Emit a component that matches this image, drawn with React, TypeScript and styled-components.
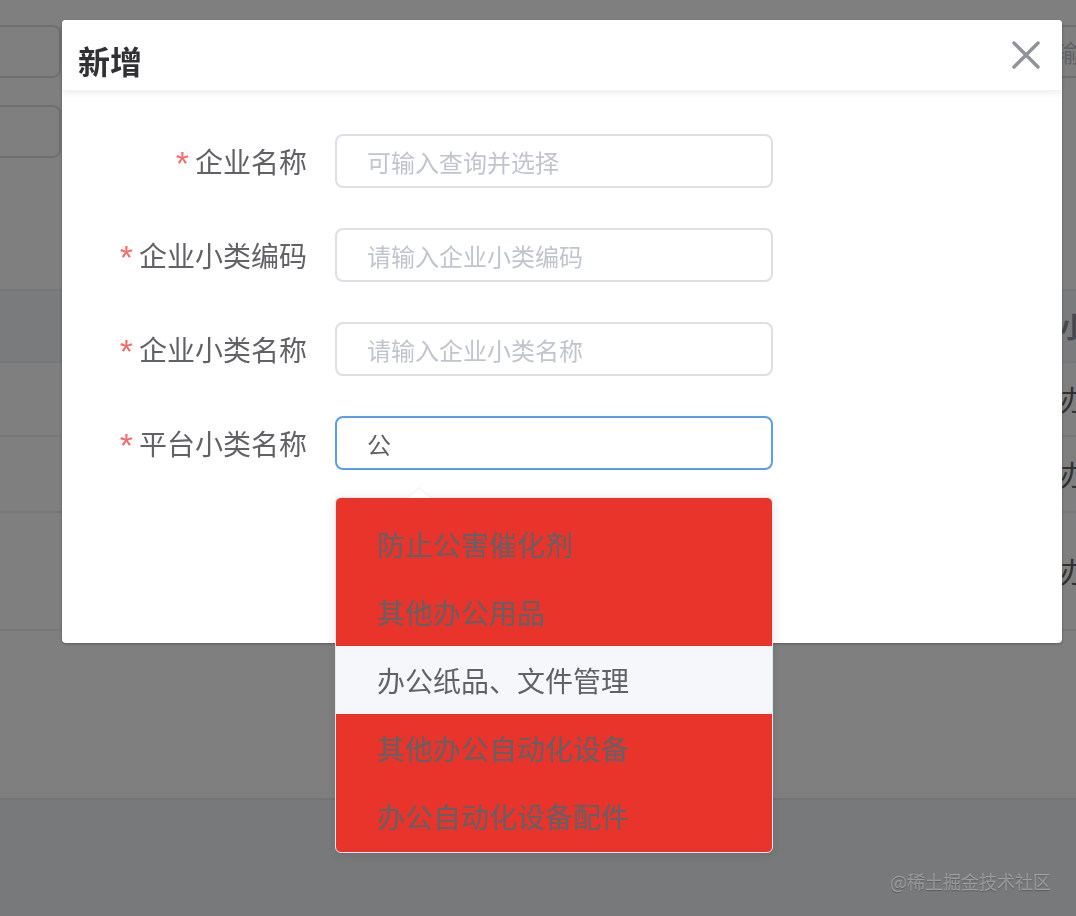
import React from "react";
import styled, { createGlobalStyle } from "styled-components";

const GlobalStyle = createGlobalStyle`
  html, body {
    margin: 0;
    padding: 0;
    width: 1076px;
    height: 916px;
    overflow: hidden;
    font-family: "Noto Sans CJK SC", "Noto Sans", sans-serif;
  }
  * { box-sizing: border-box; }
`;

/* ---------- background page (under the mask) ---------- */

const Page = styled.div`
  width: 1076px;
  height: 916px;
  background: #ffffff;
  display: flex;
  flex-direction: column;
  overflow: hidden;
`;

const Toolbar = styled.div`
  height: 289px;
  display: flex;
  justify-content: space-between;
  align-items: flex-start;
  padding-top: 25px;
`;

const ToolCol = styled.div<{ $side: "left" | "right" }>`
  display: flex;
  flex-direction: column;
  gap: 27px;
  margin-left: ${(p) => (p.$side === "left" ? "-60px" : "0")};
  margin-right: ${(p) => (p.$side === "right" ? "-60px" : "0")};
`;

const BgInput = styled.div`
  width: 121px;
  height: 53px;
  border: 2px solid #dcdfe6;
  border-radius: 8px;
  font-size: 24px;
  line-height: 49px;
  color: #c0c4cc;
  padding-left: 14px;
  white-space: nowrap;
  overflow: hidden;
`;

const Table = styled.div`
  display: flex;
  flex-direction: column;
  border-top: 2px solid #ebeef5;
`;

const TRow = styled.div<{ $h: number; $head?: boolean }>`
  height: ${(p) => p.$h}px;
  background: ${(p) => (p.$head ? "#f5f7fa" : "#ffffff")};
  border-bottom: 2px solid #ebeef5;
  display: flex;
  align-items: center;
  justify-content: flex-end;
  overflow: hidden;
`;

const TCell = styled.div<{ $head?: boolean }>`
  width: 60px;
  margin-right: -44px;
  font-size: 28px;
  white-space: nowrap;
  color: ${(p) => (p.$head ? "#909399" : "#606266")};
  font-weight: ${(p) => (p.$head ? 600 : 400)};
`;

const Spacer = styled.div`
  flex: 1;
  background: #ffffff;
`;

const Footer = styled.div`
  height: 118px;
  background: #f0f2f5;
  border-top: 2px solid #e6e8ec;
`;

/* ---------- overlay ---------- */

const Mask = styled.div`
  position: fixed;
  inset: 0;
  background: rgba(0, 0, 0, 0.5);
`;

const Watermark = styled.div`
  position: fixed;
  left: 890px;
  top: 867px;
  font-size: 18px;
  line-height: 28px;
  color: rgba(255, 255, 255, 0.32);
  text-shadow: 0 1px 1px rgba(0, 0, 0, 0.25);
  white-space: nowrap;
`;

const Dialog = styled.div`
  position: fixed;
  left: 62px;
  top: 20px;
  width: 1000px;
  height: 623px;
  background: #ffffff;
  border-radius: 4px;
  box-shadow: 0 1px 3px rgba(0, 0, 0, 0.3);
  display: flex;
  flex-direction: column;
`;

const DialogHeader = styled.div`
  position: relative;
  z-index: 1;
  height: 70px;
  padding: 0 22px 0 16px;
  display: flex;
  align-items: center;
  justify-content: space-between;
  background: #ffffff;
  border-radius: 4px 4px 0 0;
  box-shadow: 0 3px 6px rgba(0, 0, 0, 0.07);
`;

const Title = styled.div`
  margin-top: 10px;
  font-size: 32px;
  line-height: 40px;
  font-weight: 700;
  color: #303133;
`;

const CloseButton = styled.button`
  width: 28px;
  height: 28px;
  padding: 0;
  border: none;
  background: transparent;
  display: flex;
  align-items: center;
  justify-content: center;
  cursor: pointer;
`;

const DialogBody = styled.div`
  flex: 1;
  padding-top: 44px;
  display: flex;
  flex-direction: column;
  gap: 40px;
`;

const FormRow = styled.div`
  display: flex;
  align-items: center;
  height: 54px;
`;

const Label = styled.label`
  width: 273px;
  padding-right: 28px;
  text-align: right;
  font-size: 28px;
  line-height: 54px;
  color: #606266;
  white-space: nowrap;
`;

const Star = styled.span`
  color: #f56c6c;
  font-family: "Liberation Sans", sans-serif;
  font-size: 34px;
  margin-right: 6px;
  position: relative;
  top: 2px;
`;

const Field = styled.div`
  position: relative;
  width: 438px;
`;

const TextInput = styled.input<{ $focused?: boolean }>`
  width: 438px;
  height: 54px;
  border: 2px solid ${(p) => (p.$focused ? "#5c9dec" : "#dcdfe6")};
  border-radius: 8px;
  padding: 0 16px 0 30px;
  font-family: "Noto Sans CJK SC", "Noto Sans", sans-serif;
  font-size: 24px;
  color: #606266;
  outline: none;
  background: #ffffff;
  &::placeholder {
    color: #c0c4cc;
  }
`;

const Dropdown = styled.div`
  position: absolute;
  left: 0;
  top: 81px;
  width: 438px;
  height: 356px;
  background: #e8342a;
  border: 1px solid #e4e7ed;
  border-radius: 6px;
  box-shadow: 0 2px 12px rgba(0, 0, 0, 0.1);
  padding: 12px 0 2px;
  z-index: 2;
`;

const Arrow = styled.div`
  position: absolute;
  left: 71px;
  top: -11px;
  width: 0;
  height: 0;
  border-left: 12px solid transparent;
  border-right: 12px solid transparent;
  border-bottom: 11px solid #ebeef5;
  &::after {
    content: "";
    position: absolute;
    left: -11px;
    top: 1px;
    border-left: 11px solid transparent;
    border-right: 11px solid transparent;
    border-bottom: 10px solid #ffffff;
  }
`;

const OptionList = styled.ul`
  list-style: none;
  margin: 0;
  padding: 0;
`;

const Option = styled.li<{ $hover?: boolean }>`
  height: 68px;
  padding-left: 41px;
  font-size: 28px;
  line-height: 68px;
  color: #606266;
  white-space: nowrap;
  background: ${(p) => (p.$hover ? "#f5f7fa" : "transparent")};
`;

const CloseIcon = () => (
  <svg width="28" height="28" viewBox="0 0 28 28">
    <path
      d="M2 2 L26 26 M26 2 L2 26"
      stroke="#909399"
      strokeWidth="3.5"
      strokeLinecap="round"
      fill="none"
    />
  </svg>
);

const fields = [
  { label: "企业名称", placeholder: "可输入查询并选择" },
  { label: "企业小类编码", placeholder: "请输入企业小类编码" },
  { label: "企业小类名称", placeholder: "请输入企业小类名称" },
];

const options = [
  "防止公害催化剂",
  "其他办公用品",
  "办公纸品、文件管理",
  "其他办公自动化设备",
  "办公自动化设备配件",
];

export default function App() {
  return (
    <>
      <GlobalStyle />
      <Page>
        <Toolbar>
          <ToolCol $side="left">
            <BgInput />
            <BgInput />
          </ToolCol>
          <ToolCol $side="right">
            <BgInput>请输入</BgInput>
          </ToolCol>
        </Toolbar>
        <Table>
          <TRow $h={72} $head>
            <TCell $head>小类名称</TCell>
          </TRow>
          <TRow $h={74}>
            <TCell>办公用品</TCell>
          </TRow>
          <TRow $h={76}>
            <TCell>办公用品</TCell>
          </TRow>
          <TRow $h={118}>
            <TCell>办公用品</TCell>
          </TRow>
        </Table>
        <Spacer />
        <Footer />
      </Page>
      <Mask />
      <Watermark>@稀土掘金技术社区</Watermark>
      <Dialog>
        <DialogHeader>
          <Title>新增</Title>
          <CloseButton aria-label="关闭">
            <CloseIcon />
          </CloseButton>
        </DialogHeader>
        <DialogBody>
          {fields.map((f) => (
            <FormRow key={f.label}>
              <Label>
                <Star>*</Star>
                {f.label}
              </Label>
              <Field>
                <TextInput placeholder={f.placeholder} readOnly />
              </Field>
            </FormRow>
          ))}
          <FormRow>
            <Label>
              <Star>*</Star>
              平台小类名称
            </Label>
            <Field>
              <TextInput $focused value="公" readOnly />
              <Dropdown>
                <Arrow />
                <OptionList>
                  {options.map((o, i) => (
                    <Option key={o} $hover={i === 2}>
                      {o}
                    </Option>
                  ))}
                </OptionList>
              </Dropdown>
            </Field>
          </FormRow>
        </DialogBody>
      </Dialog>
    </>
  );
}
